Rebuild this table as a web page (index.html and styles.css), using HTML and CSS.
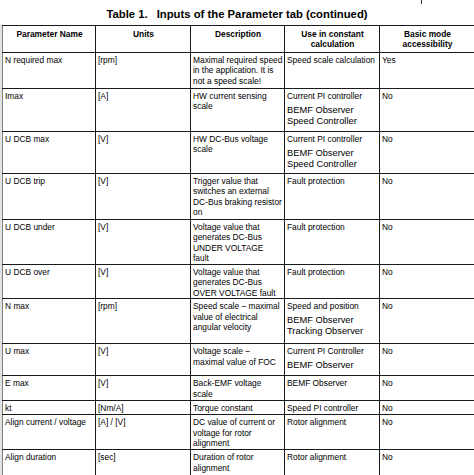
FILE: index.html
```html
<!DOCTYPE html>
<html>
<head>
<meta charset="utf-8">
<link rel="stylesheet" href="styles.css">
</head>
<body>
<span class="tick"></span>
<div class="title">Table 1.<span class="tab"></span>Inputs of the Parameter tab (continued)</div>
<table class="params">
<colgroup><col class="c1"><col class="c2"><col class="c3"><col class="c4"><col class="c5"></colgroup>
<thead>
<tr class="h27"><th>Parameter Name</th><th>Units</th><th>Description</th><th>Use in constant<br>calculation</th><th>Basic mode<br>accessibility</th></tr>
</thead>
<tbody>
<tr class="h36"><td>N required max</td><td>[rpm]</td><td>Maximal required speed<br>in the application. It is<br>not a speed scale!</td><td>Speed scale calculation</td><td>Yes</td></tr>
<tr class="h43"><td>Imax</td><td>[A]</td><td>HW current sensing<br>scale</td><td>Current PI controller<p class="big">BEMF Observer<br>Speed Controller</p></td><td>No</td></tr>
<tr class="h42"><td>U DCB max</td><td>[V]</td><td>HW DC-Bus voltage<br>scale</td><td>Current PI controller<p class="big">BEMF Observer<br>Speed Controller</p></td><td>No</td></tr>
<tr class="h46"><td>U DCB trip</td><td>[V]</td><td>Trigger value that<br>switches an external<br>DC-Bus braking resistor<br>on</td><td>Fault protection</td><td>No</td></tr>
<tr class="h45"><td>U DCB under</td><td>[V]</td><td>Voltage value that<br>generates DC-Bus<br>UNDER VOLTAGE<br>fault</td><td>Fault protection</td><td>No</td></tr>
<tr class="h34"><td>U DCB over</td><td>[V]</td><td>Voltage value that<br>generates DC-Bus<br>OVER VOLTAGE fault</td><td>Fault protection</td><td>No</td></tr>
<tr class="h45"><td>N max</td><td>[rpm]</td><td>Speed scale – maximal<br>value of electrical<br>angular velocity</td><td>Speed and position<p class="big">BEMF Observer<br>Tracking Observer</p></td><td>No</td></tr>
<tr class="h32"><td>U max</td><td>[V]</td><td>Voltage scale –<br>maximal value of FOC</td><td>Current PI Controller<p class="big">BEMF Observer</p></td><td>No</td></tr>
<tr class="h25"><td>E max</td><td>[V]</td><td>Back-EMF voltage<br>scale</td><td>BEMF Observer</td><td>No</td></tr>
<tr class="h14"><td>kt</td><td>[Nm/A]</td><td>Torque constant</td><td>Speed PI controller</td><td>No</td></tr>
<tr class="h35"><td>Align current / voltage</td><td>[A] / [V]</td><td>DC value of current or<br>voltage for rotor<br>alignment</td><td>Rotor alignment</td><td>No</td></tr>
<tr class="h40"><td>Align duration</td><td>[sec]</td><td>Duration of rotor<br>alignment</td><td>Rotor alignment</td><td>No</td></tr>
</tbody>
</table>
</body>
</html>
```
FILE: styles.css
```css
html, body {
  margin: 0;
  padding: 0;
  background: #fff;
}
body {
  width: 474px;
  height: 475px;
  font-family: "Liberation Sans", Arial, sans-serif;
  color: #000;
  overflow: hidden;
}
.tick {
  position: absolute;
  left: 421px;
  top: 0;
  width: 1px;
  height: 4px;
  background: #333;
}
.title {
  text-align: center;
  font-weight: bold;
  font-size: 11.3px;
  line-height: 22px;
  height: 22px;
  padding-top: 3px;
}
.tab {
  display: inline-block;
  width: 9px;
}
.params {
  margin-left: 2px;
  width: 472px;
  border-collapse: collapse;
  table-layout: fixed;
  font-size: 8.4px;
  line-height: 10.4px;
  box-shadow: -2px 0 0 #e2e2e2;
}
.c1 { width: 93px; }
.c2 { width: 95px; }
.c3 { width: 94px; }
.c4 { width: 95px; }
.c5 { width: 95px; }
.params th,
.params td {
  border: 1px solid #1a1a1a;
  padding: 2px 1px 0 2px;
  vertical-align: top;
  text-align: left;
  white-space: nowrap;
  overflow: hidden;
  font-weight: normal;
}
.params tr > :first-child {
  border-left-color: #808080;
}
.params th {
  text-align: center;
  font-weight: bold;
  padding-top: 3px;
  line-height: 10px;
}
.big {
  margin: 3.5px 0 0;
  font-size: 9.3px;
  line-height: 11px;
}
.h14 { height: 14px; }
.h25 { height: 25px; }
.h27 { height: 27px; }
.h32 { height: 32px; }
.h34 { height: 34px; }
.h35 { height: 35px; }
.h36 { height: 36px; }
.h40 { height: 40px; }
.h42 { height: 42px; }
.h43 { height: 43px; }
.h45 { height: 45px; }
.h46 { height: 46px; }
```
